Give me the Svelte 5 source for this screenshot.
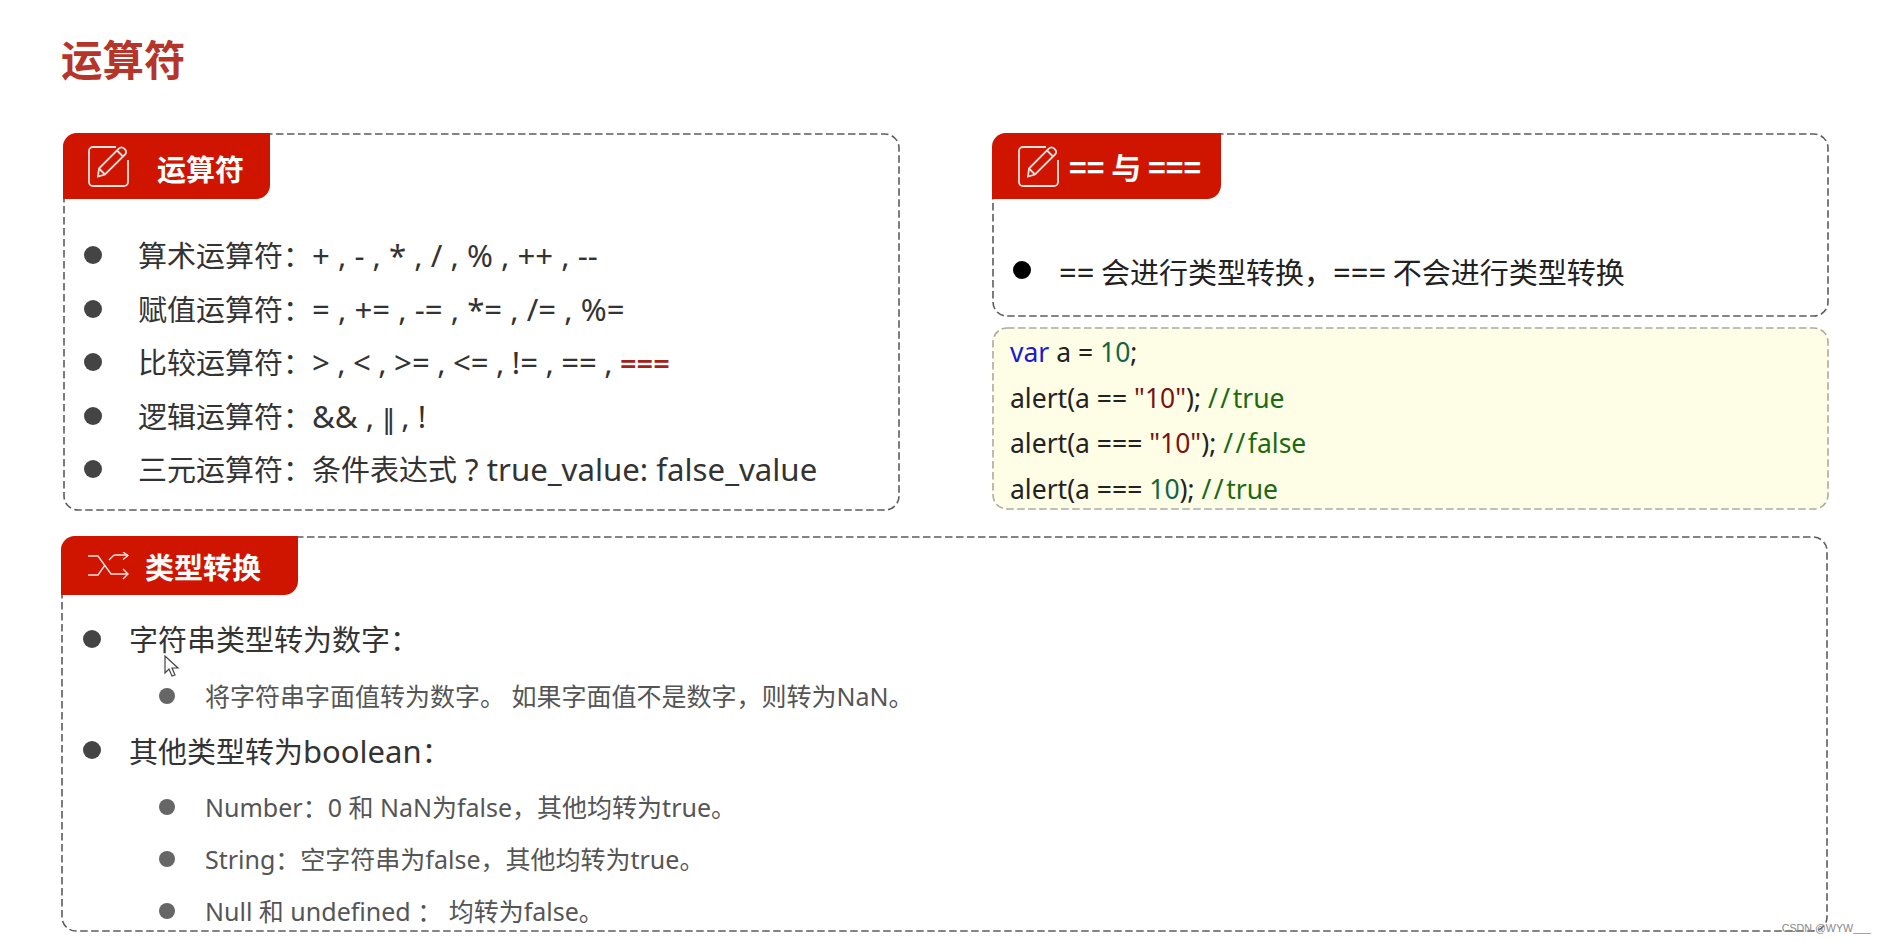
<script>
  const ops = [
    { label: '算术运算符：', text: '+ , - , * , / , % , ++ , --' },
    { label: '赋值运算符：', text: '= , += , -= , *= , /= , %=' },
    { label: '比较运算符：', text: '> , < , >= , <= , != , == , ', red: '===' },
    { label: '逻辑运算符：', text: '&& , ', pipes: '‖', tail: ' , !' },
    { label: '三元运算符：条件表达式', text: ' ? true_value: false_value' }
  ];
  const others = [
    'Number：0 和 NaN为false，其他均转为true。',
    'String：空字符串为false，其他均转为true。',
    'Null 和 undefined ： 均转为false。'
  ];
</script>

{#snippet dashes()}
  <svg class="dashes" aria-hidden="true"><rect /></svg>
{/snippet}

{#snippet editIcon()}
  <svg class="edit" viewBox="0 0 42 42" width="42" height="42">
    <path d="M29 2H6a4 4 0 0 0-4 4v31a4 4 0 0 0 4 4h31a4 4 0 0 0 4-4V15" />
    <path d="M12 23.5 32 3.500a3.200 3.200 0 0 1 5 0l1 1a3.200 3.200 0 0 1 0 5L18 29.500l-7 2z" />
    <path d="M12 23.500l6 6M30 5.500l6 6" />
  </svg>
{/snippet}

<div class="page">
  <h1>运算符</h1>

  <div class="top">
    <section class="box ops">
      {@render dashes()}
      <div class="tab tab-ops">
        {@render editIcon()}
        <span class="tab-label">运算符</span>
      </div>
      <ul class="op-list">
        {#each ops as op}
          <li class:tight={op.red}>
            <span class="cn">{op.label}</span>{op.text}{#if op.pipes}<span class="pipes">{op.pipes}</span>{op.tail}{/if}{#if op.red}<span class="red">{op.red}</span>{/if}
          </li>
        {/each}
      </ul>
    </section>

    <div class="right">
      <section class="box eq">
        {@render dashes()}
        <div class="tab tab-eq">
          {@render editIcon()}
          <span class="tab-label">== 与 ===</span>
        </div>
        <ul class="eq-list">
          <li><span class="eqs">==</span> 会进行类型转换，<span class="eqs">===</span> 不会进行类型转换</li>
        </ul>
      </section>

      <div class="box code">
        {@render dashes()}
        <div><span class="kw">var</span> a = <span class="num">10</span>;</div>
        <div>alert(a == <span class="str">"10"</span>); <span class="cm"><span class="sl">//</span>true</span></div>
        <div>alert(a === <span class="str">"10"</span>); <span class="cm"><span class="sl">//</span>false</span></div>
        <div>alert(a === <span class="num">10</span>); <span class="cm"><span class="sl">//</span>true</span></div>
      </div>
    </div>
  </div>

  <section class="box conv">
    {@render dashes()}
    <div class="tab tab-conv">
      <svg class="shuffle" viewBox="0 0 42 28" width="42" height="28">
        <path d="M0 4h10l13 18h17" />
        <path d="M0 23h10l7-10M21 8l4-4q1-1 3-1h12" />
        <path d="M35 0l5 3.500-5 4M35 17l5 5-5 5" />
      </svg>
      <span class="tab-label">类型转换</span>
    </div>
    <ul class="conv-list">
      <li class="main">字符串类型转为数字：</li>
      <li class="sub first">将字符串字面值转为数字。 如果字面值不是数字，则转为NaN。</li>
      <li class="main second">其他类型转为<span class="latin">boolean</span>：</li>
      {#each others as line}
        <li class="sub">{line}</li>
      {/each}
    </ul>
    <svg class="cursor" viewBox="0 0 16 24" width="16" height="24">
      <path d="M1 1v17l4-4 3 7 3-1-3-7h6z" />
    </svg>
  </section>

  <div class="mark">CSDN @WYW___</div>
</div>

<style>
  :global(body) {
    background: #fff;
  }

  .page {
    position: relative;
    box-sizing: border-box;
    width: 1886px;
    height: 942px;
    overflow: hidden;
    padding: 30px 57px 0 61px;
    font-family: "Noto Sans", "Noto Sans CJK SC", sans-serif;
    color: #333;
  }

  h1 {
    margin: 0 0 47px;
    font-family: "Noto Sans CJK SC", sans-serif;
    font-size: 41.5px;
    line-height: 56px;
    font-weight: 700;
    color: #b5352a;
  }

  .top {
    display: flex;
    gap: 92px;
    padding-left: 2px;
    height: 378px;
  }

  .box {
    position: relative;
    box-sizing: border-box;
  }

  .dashes {
    position: absolute;
    inset: 0;
    width: 100%;
    height: 100%;
    pointer-events: none;
  }

  .dashes rect {
    x: 1px;
    y: 1px;
    width: calc(100% - 2px);
    height: calc(100% - 2px);
    rx: 14px;
    fill: none;
    stroke: #5c5c5c;
    stroke-width: 1.6;
    stroke-dasharray: 7.5 3.5;
  }

  .ops {
    width: 837px;
  }

  .right {
    display: flex;
    flex-direction: column;
    gap: 10px;
    width: 837px;
  }

  .eq {
    height: 184px;
  }

  .tab {
    position: relative;
    display: flex;
    align-items: center;
    box-sizing: border-box;
    height: 66px;
    background: #cf1500;
    border-radius: 14px 0 14px 0;
    color: #fff;
  }

  .tab-ops {
    width: 207px;
    padding-left: 24px;
    gap: 28px;
  }

  .tab-eq {
    width: 229px;
    padding-left: 25px;
    gap: 10px;
  }

  .tab-conv {
    width: 237px;
    height: 59px;
    padding-left: 27px;
    gap: 15px;
  }

  .tab-label {
    padding-top: 3px;
    font-family: "Noto Sans CJK SC", sans-serif;
    font-size: 29px;
    font-weight: 700;
    white-space: nowrap;
  }

  .tab-eq .tab-label {
    padding-top: 0;
    font-size: 30px;
  }

  .tab-conv .tab-label {
    padding-top: 0;
  }

  .edit path,
  .shuffle path {
    fill: none;
    stroke: #f8e2de;
    stroke-width: 1.8;
  }

  .shuffle path {
    stroke-width: 1.4;
  }

  ul {
    list-style: none;
    margin: 0;
    padding: 0;
  }

  li {
    position: relative;
    white-space: nowrap;
  }

  li::before {
    content: "";
    position: absolute;
    border-radius: 50%;
  }

  .op-list {
    padding: 29px 0 0 75px;
    font-size: 31.2px;
  }

  .op-list li {
    height: 53.5px;
    line-height: 53px;
  }

  .op-list li.tight {
    word-spacing: -0.7px;
  }

  .op-list li::before {
    left: -54px;
    top: 18px;
    width: 18px;
    height: 18px;
    background: #444;
  }

  .cn {
    font-family: "Noto Sans CJK SC", sans-serif;
    font-size: 29px;
  }

  .pipes {
    font-family: "DejaVu Sans", sans-serif;
    font-size: 26px;
    letter-spacing: -2px;
  }

  .red {
    color: #a8201a;
    font-weight: 600;
    font-size: 29px;
  }

  .eq-list {
    padding: 47px 0 0 67px;
    font-size: 29px;
    line-height: 50px;
    font-family: "Noto Sans CJK SC", sans-serif;
    color: #222;
  }

  .eq-list li::before {
    left: -46px;
    top: 15px;
    width: 18px;
    height: 18px;
    background: #000;
  }

  .eqs {
    font-family: "Noto Sans", sans-serif;
    font-size: 31px;
  }

  .code {
    height: 183px;
    padding: 3px 0 0 18px;
    border-radius: 14px;
    background: #fefde6;
    font-size: 26.5px;
    line-height: 45.5px;
    color: #222;
    overflow: hidden;
  }

  .code .dashes rect {
    stroke: #aaa;
  }

  .kw {
    color: #1a1ad0;
  }

  .num {
    color: #116644;
  }

  .str {
    color: #7a1212;
  }

  .cm {
    color: #1a6a12;
  }

  .sl {
    letter-spacing: 2.5px;
  }

  .conv {
    margin-top: 25px;
    height: 396px;
    width: 1767px;
  }

  .conv-list {
    padding-top: 20px;
    padding-left: 68px;
  }

  .main {
    font-size: 29px;
    line-height: 50px;
    color: #333;
  }

  .main::before {
    left: -46px;
    top: 15px;
    width: 18px;
    height: 18px;
    background: #444;
  }

  .latin {
    font-size: 31px;
  }

  .sub {
    margin-left: 76px;
    font-size: 25px;
    line-height: 52px;
    color: #555;
  }

  .sub::before {
    left: -46px;
    top: 18px;
    width: 16px;
    height: 16px;
    background: #666;
  }

  .sub.first {
    margin-top: 5px;
  }

  .main.second {
    margin-top: 4px;
    margin-bottom: 4px;
  }

  .cursor {
    position: absolute;
    left: 103px;
    top: 119px;
  }

  .cursor path {
    fill: #fff;
    stroke: #444;
    stroke-width: 1.2;
  }

  .mark {
    position: absolute;
    right: 15px;
    bottom: 8px;
    font-family: "Liberation Sans", sans-serif;
    font-size: 10.7px;
    color: #888;
  }
</style>
